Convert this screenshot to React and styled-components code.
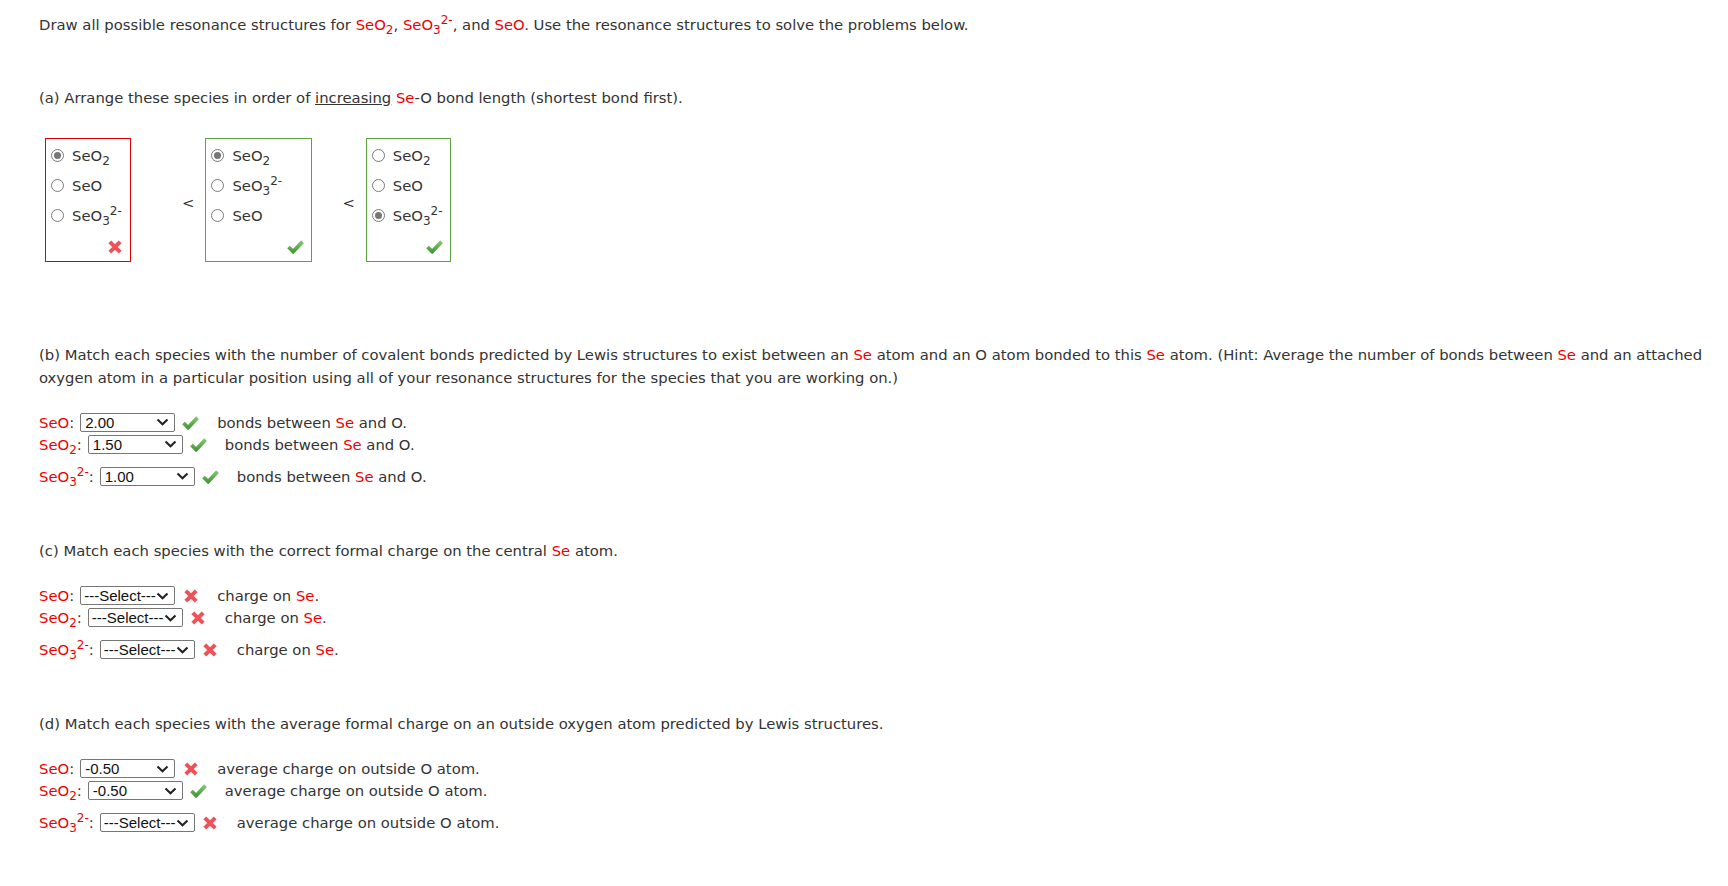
import React from "react";
import styled, { createGlobalStyle } from "styled-components";

const GlobalStyle = createGlobalStyle`
  html, body { margin: 0; padding: 0; background: #ffffff; }
  body {
    font-family: "DejaVu Sans", Verdana, sans-serif;
    font-size: 14.8px;
    color: #333333;
  }
`;

const Page = styled.div`
  padding: 12.5px 9px 40px 39px;
`;

const Para = styled.p`
  margin: ${(p) => p.$top || 0}px 0 0 0;
  line-height: 23px;
`;

const Red = styled.span`
  color: #ee0000;
`;

const Under = styled.span`
  text-decoration: underline;
`;

const Sub = styled.sub`
  font-size: 12px;
  line-height: 0;
  vertical-align: -4px;
`;

const Sup = styled.sup`
  font-size: 12px;
  line-height: 0;
  vertical-align: 6px;
`;

const Formula = ({ n, charge }) => (
  <>
    SeO{n && <Sub>{n}</Sub>}
    {charge && <Sup>{charge}</Sup>}
  </>
);

const OrderRow = styled.div`
  display: flex;
  align-items: center;
  margin-top: 29.5px;
  margin-left: 6px;
`;

const Box = styled.div`
  box-sizing: border-box;
  width: ${(p) => p.$w}px;
  border: 1px solid ${(p) => (p.$ok ? "#5fa340" : "#dd0000")};
  padding: 1px 7px 7px 5px;
  display: flex;
  flex-direction: column;
`;

const RadioRow = styled.div`
  height: 30px;
  display: flex;
  align-items: center;
  gap: 8px;
  white-space: nowrap;
`;

const Radio = styled.span`
  box-sizing: border-box;
  width: 13px;
  height: 13px;
  border-radius: 50%;
  border: 1px solid #7a7a7a;
  background: #fff;
  display: inline-flex;
  align-items: center;
  justify-content: center;
  flex: none;
  &::after {
    content: "";
    width: 7px;
    height: 7px;
    border-radius: 50%;
    background: ${(p) => (p.$on ? "#767676" : "transparent")};
  }
`;

const MarkRow = styled.div`
  display: flex;
  justify-content: flex-end;
  margin-top: 9px;
  height: 15px;
`;

const Lt = styled.span`
  margin: 0 11px 0 ${(p) => p.$gap}px;
  color: #333;
  padding-top: 4px;
`;

const Row = styled.div`
  display: flex;
  align-items: center;
  height: 22px;
  margin-top: ${(p) => p.$top || 0}px;
  white-space: nowrap;
`;

const Rows = styled.div`
  margin-top: ${(p) => p.$top}px;
`;

const Colon = styled.span`
  color: #333;
`;

const SelectBox = styled.div`
  box-sizing: border-box;
  width: 95px;
  height: 19px;
  margin-left: 6px;
  border: 1px solid #767676;
  border-radius: 2px;
  background: #fff;
  display: flex;
  align-items: center;
  justify-content: space-between;
  padding: 0 5px 0 ${(p) => (p.$placeholder ? 3 : 4)}px;
  font-family: "Liberation Sans", Arial, sans-serif;
  font-size: 15px;
  color: #111;
`;

const MarkSlot = styled.span`
  margin-left: 7px;
  width: 17px;
  height: 16px;
  display: inline-flex;
  align-items: center;
  justify-content: center;
`;

const RowText = styled.span`
  margin-left: 18px;
`;

const Chevron = () => (
  <svg width="13" height="8" viewBox="0 0 13 8">
    <path d="M1.5 1.5 L6.5 6.2 L11.5 1.5" fill="none" stroke="#222" strokeWidth="2.1" />
  </svg>
);

const Check = () => (
  <svg width="17" height="15" viewBox="0 0 17 15">
    <defs>
      <linearGradient id="gck" x1="0" y1="0" x2="0" y2="1">
        <stop offset="0" stopColor="#80c86e" />
        <stop offset="1" stopColor="#4a983c" />
      </linearGradient>
    </defs>
    <path d="M1.5 8 L6.2 12.6 L15.5 2.6" fill="none" stroke="url(#gck)" strokeWidth="3.8" strokeLinejoin="miter" />
  </svg>
);

const Cross = () => (
  <svg width="16" height="16" viewBox="0 0 16 16">
    <path d="M2.8 2.8 L13.2 13.2 M13.2 2.8 L2.8 13.2" fill="none" stroke="#ee5258" strokeWidth="4" />
  </svg>
);

const Mark = ({ ok }) => (ok ? <Check /> : <Cross />);

const OrderBox = ({ w, ok, items }) => (
  <Box $w={w} $ok={ok}>
    {items.map((it, i) => (
      <RadioRow key={i}>
        <Radio $on={it.on} />
        <span>
          <Formula n={it.n} charge={it.c} />
        </span>
      </RadioRow>
    ))}
    <MarkRow>
      <Mark ok={ok} />
    </MarkRow>
  </Box>
);

const species = [
  { n: null, c: null },
  { n: "2", c: null },
  { n: "3", c: "2-" },
];

const MatchRows = ({ top, values, marks, tail }) => (
  <Rows $top={top}>
    {species.map((s, i) => (
      <Row key={i} $top={i === 2 ? 10 : 0}>
        <Red>
          <Formula n={s.n} charge={s.c} />
        </Red>
        <Colon>:</Colon>
        <SelectBox $placeholder={!values[i]}>
          <span>{values[i] || "---Select---"}</span>
          <Chevron />
        </SelectBox>
        <MarkSlot>
          <Mark ok={marks[i]} />
        </MarkSlot>
        <RowText>{tail}</RowText>
      </Row>
    ))}
  </Rows>
);

export default function App() {
  return (
    <>
      <GlobalStyle />
      <Page>
        <Para>
          Draw all possible resonance structures for{" "}
          <Red>
            <Formula n="2" />
          </Red>
          ,{" "}
          <Red>
            <Formula n="3" charge="2-" />
          </Red>
          , and <Red>SeO</Red>. Use the resonance structures to solve the problems below.
        </Para>

        <Para $top={50}>
          (a) Arrange these species in order of <Under>increasing</Under> <Red>Se</Red>-O bond length
          (shortest bond first).
        </Para>

        <OrderRow>
          <OrderBox
            w={86}
            ok={false}
            items={[
              { n: "2", on: true },
              { n: null },
              { n: "3", c: "2-" },
            ]}
          />
          <Lt $gap={51}>&lt;</Lt>
          <OrderBox
            w={107}
            ok={true}
            items={[
              { n: "2", on: true },
              { n: "3", c: "2-" },
              { n: null },
            ]}
          />
          <Lt $gap={30}>&lt;</Lt>
          <OrderBox
            w={85}
            ok={true}
            items={[
              { n: "2" },
              { n: null },
              { n: "3", c: "2-", on: true },
            ]}
          />
        </OrderRow>

        <Para $top={80.5}>
          (b) Match each species with the number of covalent bonds predicted by Lewis structures to exist
          between an <Red>Se</Red> atom and an O atom bonded to this <Red>Se</Red> atom. (Hint: Average the
          number of bonds between <Red>Se</Red> and an attached oxygen atom in a particular position using
          all of your resonance structures for the species that you are working on.)
        </Para>
        <MatchRows
          top={22.5}
          values={["2.00", "1.50", "1.00"]}
          marks={[true, true, true]}
          tail={
            <>
              bonds between <Red>Se</Red> and O.
            </>
          }
        />

        <Para $top={52}>
          (c) Match each species with the correct formal charge on the central <Red>Se</Red> atom.
        </Para>
        <MatchRows
          top={22.5}
          values={[null, null, null]}
          marks={[false, false, false]}
          tail={
            <>
              charge on <Red>Se</Red>.
            </>
          }
        />

        <Para $top={51.5}>
          (d) Match each species with the average formal charge on an outside oxygen atom predicted by Lewis
          structures.
        </Para>
        <MatchRows
          top={22.5}
          values={["-0.50", "-0.50", null]}
          marks={[false, true, false]}
          tail={<>average charge on outside O atom.</>}
        />
      </Page>
    </>
  );
}
